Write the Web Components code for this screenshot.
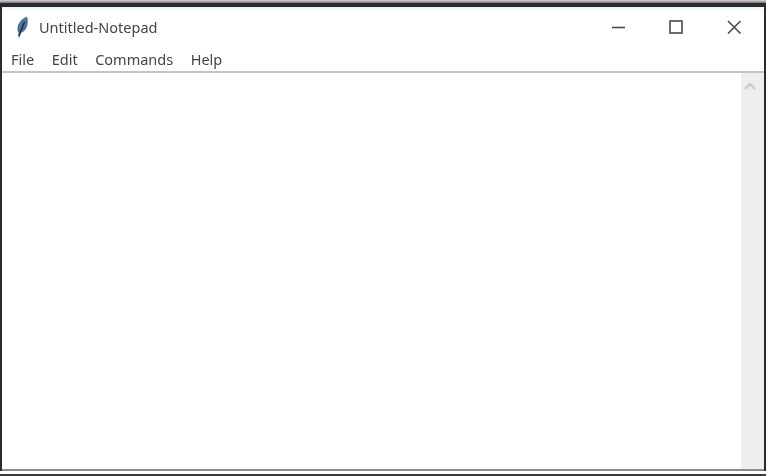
<!DOCTYPE html>
<html>
<head>
<meta charset="utf-8">
<title>Untitled-Notepad</title>
<style>
  html, body { margin: 0; height: 100%; background: #fff; overflow: hidden; }
</style>
</head>
<body>
<np-window>
  <np-titlebar>Untitled-Notepad</np-titlebar>
  <np-menubar>
    <np-menu>File</np-menu>
    <np-menu>Edit</np-menu>
    <np-menu>Commands</np-menu>
    <np-menu>Help</np-menu>
  </np-menubar>
  <np-editor></np-editor>
</np-window>
<script>
class NpWindow extends HTMLElement {
    constructor() {
        super();
        this.attachShadow({ mode: "open" }).innerHTML = `
        <style>
            :host {
                display: flex;
                flex-direction: column;
                box-sizing: border-box;
                width: 766px;
                height: 476px;
                background: #fff;
                font-family: "Noto Sans", "Open Sans", sans-serif;
                color: #3c3c3c;
                filter: blur(0.45px);
            }
            .top {
                flex: none;
                height: 3px;
                background: linear-gradient(#d8d8d8, #77777a);
            }
            .frame {
                flex: 1;
                display: flex;
                flex-direction: column;
                min-height: 0;
                border: solid #2b2b2e;
                border-width: 4px 2px 0 2px;
            }
            .tail {
                flex: none;
                height: 3px;
                background: #fff;
                border-bottom: 2px solid #3a3a3a;
            }
        </style>
        <div class="top"></div>
        <div class="frame"><slot></slot></div>
        <div class="tail"></div>`;
    }
}
customElements.define("np-window", NpWindow);

class NpTitlebar extends HTMLElement {
    constructor() {
        super();
        this.attachShadow({ mode: "open" }).innerHTML = `
        <style>
            :host {
                display: flex;
                flex: none;
                align-items: center;
                height: 40px;
                background: linear-gradient(#e6f5fb, #fff 4px);
            }
            .feather { width: 14px; height: 22px; margin-left: 13px; margin-right: 10px; }
            .title { flex: 1; font-size: 14.5px; color: #444; padding-bottom: 1px; }
            .btns { display: flex; margin-right: 1px; }
            .btn { width: 58px; height: 40px; display: flex; align-items: center; justify-content: center; }
            .btn svg { width: 16px; height: 16px; fill: none; stroke: #4a4a4a; stroke-width: 1.6; }
        </style>
        <svg class="feather" viewBox="0 0 14 22">
            <path d="M3.400 21.500 L3.600 16.800 C.6 13 3.500 3.500 12 .5 C14 6.500 12.500 14.500 6 17 L4.400 21.500 Z" fill="#4d7396"/>
            <path d="M3.800 20 L9.500 6" stroke="#1c2a38" stroke-width="1.300" fill="none"/>
        </svg>
        <span class="title"><slot></slot></span>
        <div class="btns">
            <div class="btn"><svg viewBox="0 0 16 16"><path d="M2 8.500H15"/></svg></div>
            <div class="btn"><svg viewBox="0 0 16 16"><rect x="2" y="2" width="12" height="12"/></svg></div>
            <div class="btn"><svg viewBox="0 0 16 16"><path d="M2 2L14.500 14.500M14.500 2L2 14.500"/></svg></div>
        </div>`;
    }
}
customElements.define("np-titlebar", NpTitlebar);

class NpMenubar extends HTMLElement {
    constructor() {
        super();
        this.attachShadow({ mode: "open" }).innerHTML = `
        <style>
            :host {
                display: flex;
                flex: none;
                align-items: center;
                box-sizing: content-box;
                gap: 17.500px;
                height: 23px;
                padding: 0 0 1px 9px;
                background: #fff;
                border-bottom: 2px solid #c4c4c4;
            }
        </style>
        <slot></slot>`;
    }
}
customElements.define("np-menubar", NpMenubar);

class NpMenu extends HTMLElement {
    constructor() {
        super();
        this.attachShadow({ mode: "open" }).innerHTML = `
        <style>
            :host { display: block; font-size: 14.5px; color: #444; }
        </style>
        <slot></slot>`;
    }
}
customElements.define("np-menu", NpMenu);

class NpEditor extends HTMLElement {
    constructor() {
        super();
        this.attachShadow({ mode: "open" }).innerHTML = `
        <style>
            :host {
                display: flex;
                flex: 1;
                min-height: 0;
                background: #fff;
                border-bottom: 2px solid #8c8c8c;
            }
            .text { flex: 1; }
            .scroll {
                flex: none;
                width: 23px;
                background: #eeeeee;
                display: flex;
                justify-content: flex-start;
                padding: 9px 0 0 3px;
                box-sizing: border-box;
            }
            .scroll svg { width: 12px; height: 8px; fill: none; stroke: #c9c9c9; stroke-width: 2; }
        </style>
        <div class="text"></div>
        <div class="scroll"><svg viewBox="0 0 12 8"><path d="M1 7L6 2L11 7"/></svg></div>`;
    }
}
customElements.define("np-editor", NpEditor);
</script>
</body>
</html>
